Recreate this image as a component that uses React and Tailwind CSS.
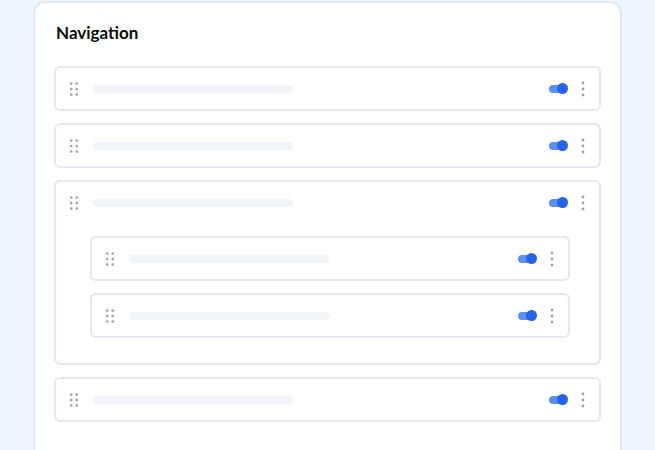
import React from "react";

const items = [
  { id: 1 },
  { id: 2 },
  { id: 3, children: [{ id: 31 }, { id: 32 }] },
  { id: 4 },
];

const DragHandle = () => (
  <svg width="8" height="14" viewBox="0 0 8 14" className="shrink-0 text-[#9ca3af]">
    {[1.5, 7, 12.5].map((cy) =>
      [1.25, 6.75].map((cx) => <circle key={`${cx}-${cy}`} cx={cx} cy={cy} r="1.35" fill="currentColor" />)
    )}
  </svg>
);

const Kebab = () => (
  <svg width="4" height="16" viewBox="0 0 4 16" className="shrink-0 text-[#9ca3af]">
    <circle cx="2" cy="2" r="1.4" fill="currentColor" />
    <circle cx="2" cy="8" r="1.4" fill="currentColor" />
    <circle cx="2" cy="14" r="1.4" fill="currentColor" />
  </svg>
);

const Toggle = () => (
  <div className="relative h-[11px] w-[19px] shrink-0">
    <div className="absolute left-0 top-[1.5px] h-[8px] w-[16px] rounded-full bg-[#5b8ff0]" />
    <div className="absolute right-0 top-0 h-[11px] w-[11px] rounded-full bg-[#2563eb]" />
  </div>
);

// single header line of a nav item
const ItemRow = () => (
  <div className="flex h-[41px] items-center px-[14px]">
    <DragHandle />
    <div className="ml-[15px] h-[8px] w-[200px] rounded-full bg-[#f1f5f9]" />
    <div className="ml-auto flex items-center gap-[13px]">
      <Toggle />
      <Kebab />
    </div>
  </div>
);

const NavItem = ({ item }) => (
  <div className="rounded-md border-2 border-[#e2e8f0] bg-white">
    <ItemRow />
    {item.children && (
      <div className="mt-[13px] flex flex-col gap-[12px] pb-[25px] pl-[34px] pr-[29px]">
        {item.children.map((c) => (
          <NavItem key={c.id} item={c} />
        ))}
      </div>
    )}
  </div>
);

export default function App() {
  return (
    <div className="h-[450px] overflow-hidden bg-[#eff6ff] pt-px" style={{ fontFamily: "Lato, 'Noto Sans', sans-serif" }}>
      <div className="mx-auto h-[470px] w-[589px] rounded-xl border-2 border-[#e2e8f0] bg-white px-[19px] pt-[18px]">
        <h1 className="mb-[21px] pl-[2px] text-[17px] font-bold leading-6 text-[#0a0a0a]">Navigation</h1>
        <div className="flex flex-col gap-[12px]">
          {items.map((item) => (
            <NavItem key={item.id} item={item} />
          ))}
        </div>
      </div>
    </div>
  );
}
